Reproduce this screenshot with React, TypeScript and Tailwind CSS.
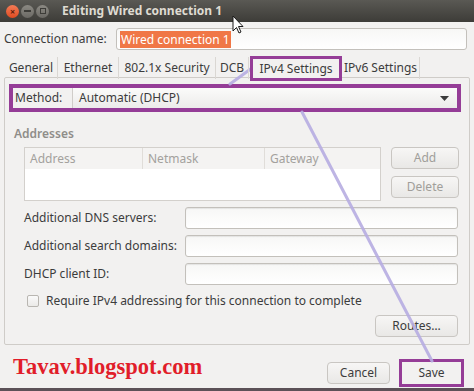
import React from "react";

const labelText = "text-[12px] text-[#3c3c3c] whitespace-nowrap";

function TitleBar() {
    return (
        <div className="h-[22px] flex items-center bg-gradient-to-b from-[#5a5954] to-[#3d3c38] pl-[6px]">
            <div className="flex items-center gap-[2px]">
                <div className="w-[13px] h-[13px] rounded-full bg-gradient-to-b from-[#f47b55] to-[#df4a1f] flex items-center justify-center text-[9px] leading-none text-[#5a1c0b] font-bold">
                    ×
                </div>
                <div className="w-[13px] h-[13px] rounded-full bg-gradient-to-b from-[#8b8983] to-[#6b6964] flex items-center justify-center">
                    <div className="w-[7px] h-[2px] bg-[#3d3c38]" />
                </div>
                <div className="w-[13px] h-[13px] rounded-full bg-gradient-to-b from-[#8b8983] to-[#6b6964] flex items-center justify-center">
                    <div className="w-[6px] h-[6px] border border-[#3d3c38]" />
                </div>
            </div>
            <span className="ml-[13px] text-[12px] font-bold text-[#dfdbd2] whitespace-nowrap">Editing Wired connection 1</span>
        </div>
    );
}

function Entry({ className = "" }: { className?: string }) {
    return (
        <div
            className={`h-[22px] rounded-[3px] border border-[#c3c0bb] bg-gradient-to-b from-[#f7f7f6] to-white shadow-[inset_0_1px_1px_rgba(0,0,0,0.08)] ${className}`}
        />
    );
}

function Button({ label, disabled, className = "" }: { label: string; disabled?: boolean; className?: string }) {
    return (
        <div
            className={`h-[22px] rounded-[4px] border border-[#c9c6c2] bg-gradient-to-b from-[#f7f6f5] to-[#e9e8e6] flex items-center justify-center text-[12px] whitespace-nowrap ${
                disabled ? "text-[#a09e9a]" : "text-[#3c3c3c]"
            } ${className}`}
        >
            {label}
        </div>
    );
}

const tabs = [
    { name: "General", w: "w-[53px]" },
    { name: "Ethernet", w: "w-[61px]" },
    { name: "802.1x Security", w: "w-[97px]" },
    { name: "DCB", w: "w-[33px]" },
];

function Tabs() {
    return (
        <div className="flex items-end h-[25px] mt-[4px] ml-[5px] relative z-10">
            {tabs.map((t) => (
                <div key={t.name} className={`${t.w} h-[22px] flex items-center justify-center border-r border-[#dad7d3] ${labelText}`}>
                    {t.name}
                </div>
            ))}
            <div className="w-[92px] h-[25px] ml-[1px] border-[3px] border-[#953d97] bg-[#f2f1f0] flex items-center justify-center -mb-[2px]">
                <span className={labelText}>IPv4 Settings</span>
            </div>
            <div className={`w-[78px] h-[22px] flex items-center justify-center border-r border-[#dad7d3] ${labelText}`}>
                IPv6 Settings
            </div>
        </div>
    );
}

function FieldRow({ label }: { label: string }) {
    return (
        <div className="flex items-center">
            <span className={`w-[161px] ${labelText}`}>{label}</span>
            <Entry className="w-[273px]" />
        </div>
    );
}

function Overlay() {
    return (
        <svg className="absolute inset-0 pointer-events-none" width="474" height="391" viewBox="0 0 474 391">
            <g stroke="#b7ade2" strokeWidth="3" strokeLinecap="round" opacity="0.9">
                <line x1="252" y1="68" x2="230" y2="84" />
                <line x1="302" y1="112" x2="432" y2="361" />
            </g>
            <path
                d="M233 16 L233 31 L236.5 27.5 L239 33 L241 32 L238.5 26.5 L243 26.5 Z"
                fill="#ffffff"
                stroke="#1a1a1a"
                strokeWidth="1"
                strokeLinejoin="round"
            />
        </svg>
    );
}

export default function App() {
    return (
        <div className="w-[474px] h-[391px] relative overflow-hidden bg-[#f2f1f0] flex flex-col font-['Noto_Sans',sans-serif]">
            <TitleBar />

            <div className="flex items-center mt-[6px] pl-[4px]">
                <span className={`w-[112px] ${labelText}`}>Connection name:</span>
                <div className="w-[351px] h-[22px] rounded-[3px] border border-[#c3c0bb] bg-gradient-to-b from-[#f7f7f6] to-white flex items-center pl-[3px]">
                    <span className="bg-[#f07746] text-white text-[12px] leading-[17px] px-[1px] whitespace-nowrap">Wired connection 1</span>
                </div>
            </div>

            <Tabs />

            <div className="mx-[4px] h-[268px] shrink-0 -mt-[2px] border border-[#cfccc8] rounded-[2px] bg-[#f2f1f0] flex flex-col pt-[6px]">
                <div className="mx-[4px] h-[28px] w-[452px] shrink-0 border-[4px] border-[#953d97] flex items-center">
                    <span className={`w-[59px] pl-[2px] ${labelText}`}>Method:</span>
                    <div className="flex-1 h-[20px] border-l border-[#d0cdc9] bg-gradient-to-b from-[#fbfbfa] to-[#ecebea] flex items-center justify-between pl-[6px] pr-[8px]">
                        <span className={labelText}>Automatic (DHCP)</span>
                        <svg width="9" height="5" viewBox="0 0 9 5">
                            <path d="M0 0 L9 0 L4.5 5 Z" fill="#3c3c3c" />
                        </svg>
                    </div>
                </div>

                <div className="mt-[13px] ml-[9px] h-[18px] leading-[18px] text-[12px] font-semibold text-[#8f8d89]">Addresses</div>

                <div className="flex mt-[4px] ml-[19px]">
                    <div className="w-[357px] h-[54px] border border-[#d3d0cc] bg-white flex flex-col">
                        <div className="flex h-[21px] bg-[#f4f3f2] text-[12px] text-[#a3a19d]">
                            <div className="w-[118px] pl-[5px] flex items-center border-r border-[#e0ddd9]">Address</div>
                            <div className="w-[122px] pl-[5px] flex items-center border-r border-[#e0ddd9]">Netmask</div>
                            <div className="flex-1 pl-[5px] flex items-center">Gateway</div>
                        </div>
                    </div>
                    <div className="ml-[10px] flex flex-col gap-[7px]">
                        <Button label="Add" disabled className="w-[68px]" />
                        <Button label="Delete" disabled className="w-[68px]" />
                    </div>
                </div>

                <div className="ml-[19px] mt-[6px] flex flex-col gap-[6px]">
                    <FieldRow label="Additional DNS servers:" />
                    <FieldRow label="Additional search domains:" />
                    <FieldRow label="DHCP client ID:" />
                </div>

                <div className="ml-[22px] mt-[10px] h-[12px] flex items-center">
                    <div className="w-[12px] h-[12px] rounded-[2px] border border-[#b9b6b1] bg-gradient-to-b from-[#fafafa] to-[#ebeae8]" />
                    <span className={`ml-[7px] ${labelText}`}>Require IPv4 addressing for this connection to complete</span>
                </div>

                <div className="flex justify-end mr-[11px] mt-[8px]">
                    <Button label="Routes…" className="w-[83px]" />
                </div>
            </div>

            <div className="flex items-center h-[43px] shrink-0 pt-[13px] pb-[1px] pl-[13px] pr-[10px]">
                <span className="mb-[11px] font-['Liberation_Serif',serif] font-bold text-[22.5px] text-[#e11d2a] leading-none whitespace-nowrap">
                    Tavav.blogspot.com
                </span>
                <div className="ml-auto flex items-center">
                    <Button label="Cancel" className="w-[63px]" />
                    <div className="ml-[9px] w-[65px] h-[28px] border-[3px] border-[#953d97] bg-[#f2f1f0] flex items-center justify-center">
                        <span className={labelText}>Save</span>
                    </div>
                </div>
            </div>

            <div className="flex-1 bg-[#5c5157]" />

            <Overlay />
        </div>
    );
}
